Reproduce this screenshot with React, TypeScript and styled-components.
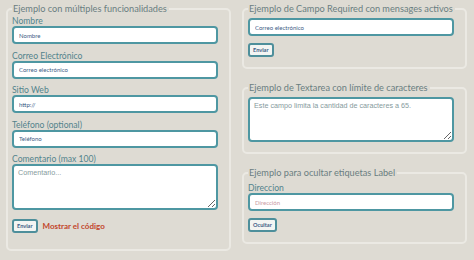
import { createGlobalStyle } from 'styled-components';
import styled from 'styled-components';

const GlobalStyle = createGlobalStyle`
  html, body {
    margin: 0;
    padding: 0;
    background: #dedbd3;
  }
  body {
    font-family: Lato, "Open Sans", "Liberation Sans", sans-serif;
    color: #4b7f88;
  }
  * {
    box-sizing: border-box;
  }
`;

const Page = styled.div`
  display: grid;
  grid-template-columns: 225px 225px;
  column-gap: 11px;
  align-items: start;
  width: 474px;
  height: 260px;
  padding: 2px 0 0 6px;
  overflow: hidden;
`;

const Column = styled.div`
  display: flex;
  flex-direction: column;
  gap: 12px;
`;

const Box = styled.fieldset<{ $tall?: boolean }>`
  margin: 0;
  min-width: 0;
  height: ${(p) => (p.$tall ? '249px' : 'auto')};
  padding: 0 12px 10px 4px;
  border: 2px solid #ebe9e3;
  border-radius: 5px;
  display: flex;
  flex-direction: column;
`;

const Legend = styled.legend`
  padding: 0 2px 0 1px;
  margin-left: 0;
  font-size: 9.2px;
  line-height: 13px;
  white-space: nowrap;
  color: #6a7e81;
`;

const Label = styled.label<{ $top?: number }>`
  display: block;
  margin-top: ${(p) => p.$top ?? 0}px;
  padding-top: 2px;
  font-size: 8.6px;
  line-height: 9px;
  color: #52838c;
`;

const Group = styled.div`
  display: flex;
  flex-direction: column;
  margin-bottom: 5.5px;
`;

const Input = styled.input<{ $pink?: boolean }>`
  display: block;
  width: 206px;
  height: 18px;
  margin: 0;
  padding: 0 5px;
  border: 2px solid #4e97a2;
  border-radius: 4px;
  background: #ffffff;
  font-family: inherit;
  font-size: 6px;
  color: #33547f;
  &::placeholder {
    color: ${(p) => (p.$pink ? '#c99aa3' : '#3e5c86')};
  }
`;

const Area = styled.textarea<{ $h: number }>`
  display: block;
  width: 206px;
  height: ${(p) => p.$h}px;
  margin: 0;
  padding: 2px 4px;
  border: 2px solid #4e97a2;
  border-radius: 4px;
  background: #ffffff;
  font-family: "Liberation Sans", Arial, sans-serif;
  font-size: 7.2px;
  line-height: 10px;
  resize: vertical;
  &::placeholder {
    color: #869a9d;
  }
`;

const Actions = styled.div<{ $top: number }>`
  display: flex;
  align-items: center;
  gap: 5px;
  margin-top: ${(p) => p.$top}px;
`;

const Button = styled.button`
  height: 14px;
  padding: 0 3px;
  border: 2px solid #4e8f9b;
  border-radius: 3px;
  background: #f3f5f3;
  font-family: inherit;
  font-size: 5.6px;
  font-weight: 700;
  color: #3e5c86;
  line-height: 10px;
`;

const CodeLink = styled.a`
  font-size: 8px;
  font-weight: 700;
  color: #c2462b;
  text-decoration: none;
`;

export default function App() {
  return (
    <>
      <GlobalStyle />
      <Page>
        <Box $tall>
          <Legend>Ejemplo con múltiples funcionalidades</Legend>
          <Group>
            <Label>Nombre</Label>
            <Input placeholder="Nombre" />
          </Group>
          <Group>
            <Label>Correo Electrónico</Label>
            <Input placeholder="Correo electrónico" />
          </Group>
          <Group>
            <Label>Sitio Web</Label>
            <Input defaultValue="http://" />
          </Group>
          <Group>
            <Label>Teléfono (optional)</Label>
            <Input placeholder="Teléfono" />
          </Group>
          <Group>
            <Label>Comentario (max 100)</Label>
            <Area $h={46} placeholder="Comentario..." />
          </Group>
          <Actions $top={3}>
            <Button>Enviar</Button>
            <CodeLink href="#">Mostrar el código</CodeLink>
          </Actions>
        </Box>
        <Column>
          <Box>
            <Legend>Ejemplo de Campo Required con mensages activos</Legend>
            <Input placeholder="Correo electrónico" style={{ marginTop: 3 }} />
            <Actions $top={7}>
              <Button>Enviar</Button>
            </Actions>
          </Box>
          <Box>
            <Legend>Ejemplo de Textarea con límite de caracteres</Legend>
            <Area $h={45} style={{ marginTop: 3 }} placeholder="Este campo limita la cantidad de caracteres a 65." />
          </Box>
          <Box>
            <Legend>Ejemplo para ocultar etiquetas Label</Legend>
            <Label $top={3}>Direccion</Label>
            <Input $pink placeholder="Dirección" />
            <Actions $top={7}>
              <Button>Ocultar</Button>
            </Actions>
          </Box>
        </Column>
      </Page>
    </>
  );
}
